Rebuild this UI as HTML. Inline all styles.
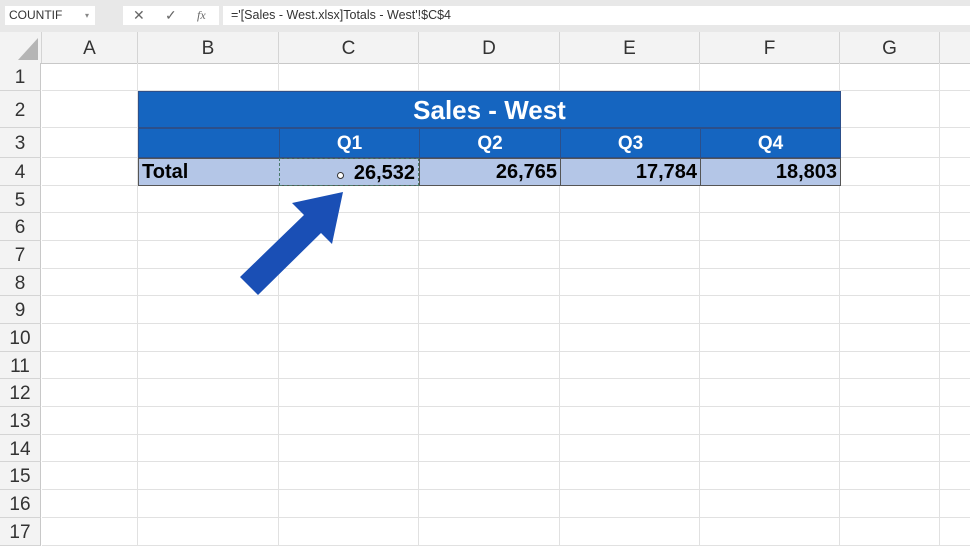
<!DOCTYPE html>
<html><head><style>
body{margin:0;width:970px;height:546px;overflow:hidden;background:#fff;font-family:"Liberation Sans",sans-serif;position:relative}
.top{position:absolute;left:0;top:0;width:970px;height:32px;background:#e8e8e8}
.box{position:absolute;background:#fff;top:6px;height:19px;font-size:12px;line-height:19px;color:#333}
.ch{position:absolute;top:32px;left:0;width:970px;height:31px;background:#f3f3f3;border-bottom:1px solid #c8c8c8}
.ch div{position:absolute;top:0;height:31px;line-height:33px;text-align:center;font-size:19px;color:#333;border-right:1px solid #d4d4d4}
.rh{position:absolute;left:0;width:41px;background:#f3f3f3;border-right:1px solid #c8c8c8;text-align:center;font-size:19px;color:#333;border-bottom:1px solid #d4d4d4;box-sizing:border-box}
.hl{position:absolute;left:42px;width:928px;height:1px;background:#e1e1e1}
.vl{position:absolute;top:63px;width:1px;height:483px;background:#e1e1e1}
.c{position:absolute;font-weight:bold;font-size:20px;box-sizing:border-box}
</style></head><body>
<div class="top"></div>
<div class="box" style="left:5px;width:90px;padding-left:4px;box-sizing:border-box">COUNTIF<span style="position:absolute;right:6px;font-size:8px;color:#888">▾</span></div>
<div class="box" style="left:123px;width:96px;color:#666;font-size:14px"><span style="position:absolute;left:10px">✕</span><span style="position:absolute;left:42px">✓</span><span style="position:absolute;left:74px;font-family:'Liberation Serif';font-style:italic;font-size:12px">fx</span></div>
<div class="box" style="left:223px;width:747px;padding-left:8px;box-sizing:border-box;font-size:12.5px">='[Sales - West.xlsx]Totals - West'!$C$4</div>
<div class="ch">
<div style="left:0;width:41px;background:#f3f3f3"><svg width="41" height="31"><polygon points="18,28 38,28 38,6" fill="#b5b5b5"/></svg></div>
<div style="left:42px;width:95px">A</div><div style="left:138px;width:140px">B</div><div style="left:279px;width:139px">C</div><div style="left:419px;width:140px">D</div><div style="left:560px;width:139px">E</div><div style="left:700px;width:139px">F</div><div style="left:840px;width:99px">G</div>
</div>
<div id="rows"></div>
<script>
var ys=[63,91,128,158,186,213,241,269,296,324,352,379,407,435,462,490,518,546];
var h='';
for(var i=0;i<17;i++){h+='<div class="rh" style="top:'+ys[i]+'px;height:'+(ys[i+1]-ys[i])+'px;line-height:'+(ys[i+1]-ys[i]+2)+'px">'+(i+1)+'</div>';h+='<div class="hl" style="top:'+(ys[i+1]-1)+'px"></div>';}
[137,278,418,559,699,839,939].forEach(function(x){h+='<div class="vl" style="left:'+x+'px"></div>'});
document.getElementById('rows').innerHTML=h;
</script>
<div class="c" style="left:138px;top:91px;width:703px;height:37px;background:#1565c0;color:#fff;text-align:center;font-size:26px;line-height:37px;border:1px solid #2c4f8a">Sales - West</div>
<div class="c" style="left:138px;top:128px;width:703px;height:30px;background:#1565c0;border:1px solid #2c4f8a"></div>
<div class="c" style="left:279px;top:128px;width:140px;height:30px;color:#fff;text-align:center;line-height:31px;font-size:19px;border-left:1px solid #2c4f8a">Q1</div>
<div class="c" style="left:419px;top:128px;width:141px;height:30px;color:#fff;text-align:center;line-height:31px;font-size:19px;border-left:1px solid #2c4f8a">Q2</div>
<div class="c" style="left:560px;top:128px;width:140px;height:30px;color:#fff;text-align:center;line-height:31px;font-size:19px;border-left:1px solid #2c4f8a">Q3</div>
<div class="c" style="left:700px;top:128px;width:140px;height:30px;color:#fff;text-align:center;line-height:31px;font-size:19px;border-left:1px solid #2c4f8a">Q4</div>
<div class="c" style="left:138px;top:158px;width:703px;height:28px;background:#b4c6e7;border:1px solid #555"></div>
<div class="c" style="left:142px;top:158px;line-height:28px">Total</div>
<div class="c" style="left:279px;top:158px;width:140px;height:28px;line-height:28px;text-align:right;padding-right:3px;border:1px dashed #4a7a6a">26,532</div>
<div class="c" style="left:419px;top:158px;width:141px;height:28px;line-height:28px;text-align:right;padding-right:3px;border-left:1px solid #555">26,765</div>
<div class="c" style="left:560px;top:158px;width:140px;height:28px;line-height:28px;text-align:right;padding-right:3px;border-left:1px solid #555">17,784</div>
<div class="c" style="left:700px;top:158px;width:140px;height:28px;line-height:28px;text-align:right;padding-right:3px;border-left:1px solid #555">18,803</div>
<div style="position:absolute;left:337px;top:172px;width:5px;height:5px;border:1px solid #333;border-radius:50%;background:#fff"></div>
<svg style="position:absolute;left:0;top:0" width="970" height="546"><polygon points="343,192 292,203 304,215 240,277 258,295 321,233 332,244" fill="#1a4fb5"/></svg>
</body></html>
